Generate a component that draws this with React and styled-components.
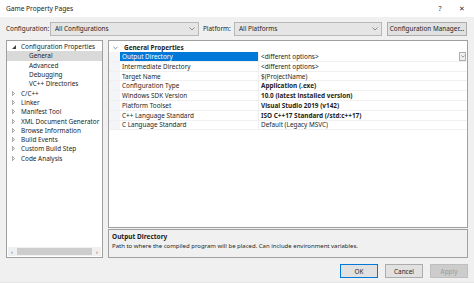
import React from "react";
import styled, { createGlobalStyle, css } from "styled-components";

const Global = createGlobalStyle`
  html, body { margin: 0; padding: 0; }
  body {
    width: 474px; height: 283px; overflow: hidden;
    background: #f0f0f0;
    font-family: "Noto Sans", "Open Sans", sans-serif;
    font-size: 6.4px;
    color: #1e1e1e;
  }
  * { box-sizing: border-box; }
`;

const Window = styled.div`
  width: 474px; height: 283px;
  display: flex; flex-direction: column;
  background: #f0f0f0;
`;

const TitleBar = styled.div`
  height: 17px; background: #fff;
  display: flex; align-items: center;
  padding: 0 1px 0 6px;
  font-size: 6.6px; color: #222;
`;
const Title = styled.div` flex: 1; `;
const TitleBtn = styled.div`
  width: 22px; text-align: center; font-size: 7px; color: #333;
`;

const ConfigRow = styled.div`
  height: 23px;
  display: flex; align-items: center;
  padding: 0 7px 0 6px;
`;
const Label = styled.span`
  width: ${p => p.$w}px;
  white-space: nowrap;
  flex: none;
`;
const Combo = styled.div`
  width: ${p => p.$w}px; height: 14px;
  background: #e5e5e5; border: 1px solid #b8b8b8;
  display: flex; align-items: center; justify-content: space-between;
  padding: 0 3px 0 4px;
  margin-right: ${p => p.$mr}px;
  flex: none;
`;
const Chev = styled.svg`
  width: 6px; height: 4px; flex: none;
`;
const Button = styled.div`
  width: ${p => p.$w}px; height: 14px;
  background: ${p => p.$disabled ? "#cccccc" : "#e1e1e1"};
  border: 1px solid ${p => p.$primary ? "#0078d7" : p.$disabled ? "#bfbfbf" : "#adadad"};
  color: ${p => p.$disabled ? "#9a9a9a" : "#1e1e1e"};
  display: flex; align-items: center; justify-content: center;
  white-space: nowrap;
  flex: none;
`;

const Main = styled.div`
  display: flex; gap: 5px;
  padding: 0 6px 0 6px;
  height: 218px;
`;

const TreePanel = styled.div`
  width: 97px; background: #fff; border: 1px solid #a0a0a0;
  display: flex; flex-direction: column;
`;
const TreeList = styled.div`
  flex: 1; padding-top: 1px;
`;
const TreeRow = styled.div`
  height: 9.3px; display: flex; align-items: center;
  padding-left: ${p => p.$indent}px;
  white-space: nowrap;
  ${p => p.$selected && css`background: #d9d9d9;`}
`;
const Expander = styled.span`
  width: 11px; display: inline-flex; justify-content: flex-start; align-items: center;
  padding-left: 2px;
`;

const HScroll = styled.div`
  height: 9px; margin: 0 1px 1px 1px; display: flex; align-items: center;
  background: #f0f0f0;
`;
const ScrollArrow = styled.div`
  width: 8px; text-align: center; font-size: 6px; color: #444;
`;
const ScrollThumb = styled.div`
  flex: 1; height: 7px; background: #cdcdcd; margin: 0 1px;
`;

const RightCol = styled.div`
  flex: 1; display: flex; flex-direction: column; gap: 1px;
`;
const Grid = styled.div`
  flex: 1; background: #fff; border: 1px solid #a0a0a0;
  display: flex; flex-direction: column; padding-top: 2px;
`;
const GroupHeader = styled.div`
  height: 9px; display: flex; align-items: center;
  font-weight: 700; padding-left: 4px;
`;
const GroupChev = styled.svg` width: 5px; height: 4px; margin-right: 6px; `;
const GridRows = styled.div` display: flex; flex-direction: column; `;
const GridRow = styled.div`
  height: 9.8px; display: flex; align-items: stretch;
  border-bottom: 1px solid #f0f0f0;
`;
const Gutter = styled.div` width: 11px; background: #f3f5f8; `;
const NameCell = styled.div`
  width: 139px; display: flex; align-items: center; padding-left: 2px;
  white-space: nowrap;
  ${p => p.$selected ? css`background: #0078d7; color: #fff;` : ""}
  border-right: 1px solid #eeeeee;
`;
const ValueCell = styled.div`
  flex: 1; display: flex; align-items: center; padding-left: 2px;
  white-space: nowrap;
  font-weight: ${p => p.$bold ? 700 : 400};
`;
const DropBtn = styled.div`
  width: 7px; height: 9px; margin: 0 1px 0 auto; align-self: center;
  border: 1px solid #adadad; background: #f0f0f0;
  display: flex; align-items: center; justify-content: center;
`;

const Desc = styled.div`
  height: 29px; border: 1px solid #a0a0a0; background: #f0f0f0;
  padding: 2px 3px; display: flex; flex-direction: column; gap: 1px;
`;
const DescTitle = styled.div` font-weight: 700; height: 9px; font-size: 6.5px; `;
const DescText = styled.div` height: 9px; font-size: 6px; `;

const Footer = styled.div`
  height: 25px; display: flex; align-items: flex-start; justify-content: flex-end;
  gap: 7px; padding: 6px 6px 0 0;
  border-bottom: 1px solid #e6e6e6;
`;

const ChevronDown = ({ as: C = Chev, color = "#777" }) => (
  <C viewBox="0 0 6 4"><path d="M0.5 0.5 L3 3 L5.5 0.5" fill="none" stroke={color} strokeWidth="0.8" /></C>
);

const tree = [
  { t: "Configuration Properties", exp: "open", indent: 3 },
  { t: "General", indent: 22, sel: true },
  { t: "Advanced", indent: 22 },
  { t: "Debugging", indent: 22 },
  { t: "VC++ Directories", indent: 22 },
  { t: "C/C++", exp: "closed", indent: 3 },
  { t: "Linker", exp: "closed", indent: 3 },
  { t: "Manifest Tool", exp: "closed", indent: 3 },
  { t: "XML Document Generator", exp: "closed", indent: 3 },
  { t: "Browse Information", exp: "closed", indent: 3 },
  { t: "Build Events", exp: "closed", indent: 3 },
  { t: "Custom Build Step", exp: "closed", indent: 3 },
  { t: "Code Analysis", exp: "closed", indent: 3 },
];

const props = [
  ["Output Directory", "<different options>", false, true],
  ["Intermediate Directory", "<different options>"],
  ["Target Name", "$(ProjectName)"],
  ["Configuration Type", "Application (.exe)", true],
  ["Windows SDK Version", "10.0 (latest installed version)", true],
  ["Platform Toolset", "Visual Studio 2019 (v142)", true],
  ["C++ Language Standard", "ISO C++17 Standard (/std:c++17)", true],
  ["C Language Standard", "Default (Legacy MSVC)"],
];

export default function App() {
  return (
    <Window>
      <Global />
      <TitleBar>
        <Title>Game Property Pages</Title>
        <TitleBtn>?</TitleBtn>
        <TitleBtn>✕</TitleBtn>
      </TitleBar>
      <ConfigRow>
        <Label $w={44}>Configuration:</Label>
        <Combo $w={149} $mr={4}>
          <span>All Configurations</span>
          <ChevronDown />
        </Combo>
        <Label $w={31}>Platform:</Label>
        <Combo $w={148} $mr={5}>
          <span>All Platforms</span>
          <ChevronDown />
        </Combo>
        <Button $w={80}>Configuration Manager...</Button>
      </ConfigRow>
      <Main>
        <TreePanel>
          <TreeList>
            {tree.map((r) => (
              <TreeRow key={r.t} $indent={r.indent} $selected={r.sel}>
                {r.exp && (
                  <Expander>
                    {r.exp === "open" ? (
                      <svg width="4" height="4" viewBox="0 0 4 4"><path d="M4 0 L4 4 L0 4 Z" fill="#444" /></svg>
                    ) : (
                      <svg width="3" height="5" viewBox="0 0 3 5"><path d="M0.4 0.4 L2.6 2.5 L0.4 4.6 Z" fill="none" stroke="#666" strokeWidth="0.6" /></svg>
                    )}
                  </Expander>
                )}
                {r.t}
              </TreeRow>
            ))}
          </TreeList>
          <HScroll>
            <ScrollArrow>‹</ScrollArrow>
            <ScrollThumb />
            <ScrollArrow>›</ScrollArrow>
          </HScroll>
        </TreePanel>
        <RightCol>
          <Grid>
            <GroupHeader>
              <ChevronDown as={GroupChev} color="#555" />
              General Properties
            </GroupHeader>
            <GridRows>
              {props.map(([n, v, b, sel]) => (
                <GridRow key={n}>
                  <Gutter />
                  <NameCell $selected={sel}>{n}</NameCell>
                  <ValueCell $bold={b}>
                    {v}
                    {sel && (
                      <DropBtn>
                        <svg width="4" height="3" viewBox="0 0 6 4"><path d="M0.5 0.5 L3 3 L5.5 0.5" fill="none" stroke="#555" strokeWidth="0.9" /></svg>
                      </DropBtn>
                    )}
                  </ValueCell>
                </GridRow>
              ))}
            </GridRows>
          </Grid>
          <Desc>
            <DescTitle>Output Directory</DescTitle>
            <DescText>Path to where the compiled program will be placed. Can include environment variables.</DescText>
          </Desc>
        </RightCol>
      </Main>
      <Footer>
        <Button $w={38} $primary>OK</Button>
        <Button $w={38}>Cancel</Button>
        <Button $w={38} $disabled>Apply</Button>
      </Footer>
    </Window>
  );
}
